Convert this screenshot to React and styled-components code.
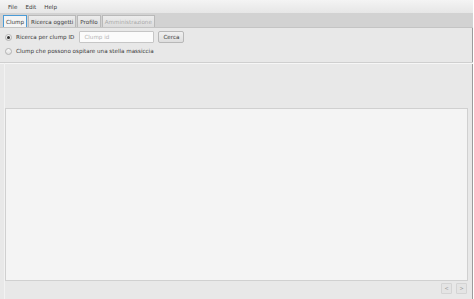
import React, { useState } from "react";
import styled, { createGlobalStyle } from "styled-components";

const GlobalStyle = createGlobalStyle`
  html, body {
    margin: 0;
    padding: 0;
    background: #e8e8e8;
  }
  * {
    box-sizing: border-box;
  }
`;

const Window = styled.div`
  width: 474px;
  height: 299px;
  display: flex;
  flex-direction: column;
  background: #e8e8e8;
  font-family: "DejaVu Sans", "Noto Sans", sans-serif;
  font-size: 5.6px;
  color: #3a3a3a;
  border-right: 1px solid #fff;
  box-shadow: inset -1px 0 0 #9c9c9c;
  overflow: hidden;
`;

const MenuBar = styled.div`
  height: 14px;
  display: flex;
  align-items: center;
  padding-left: 4px;
  background: linear-gradient(#f4f4f4, #e6e6e6);
  border-bottom: 1px solid #d2d2d2;
`;

const MenuItem = styled.span`
  padding: 0 4px;
`;

const TabHeader = styled.div`
  height: 14px;
  display: flex;
  align-items: flex-end;
  gap: 1px;
  padding-left: 3px;
  background: #d2d2d2;
  border-bottom: 1px solid #c4c4c4;
`;

const Tab = styled.div`
  height: 12px;
  display: flex;
  align-items: center;
  padding: 0 2px;
  border: 1px solid ${({ $active }) => ($active ? "#4a9bd6" : "#b9b9b9")};
  border-bottom: none;
  background: ${({ $active }) =>
    $active ? "#f4f4f4" : "linear-gradient(#ececec, #dcdcdc)"};
  color: ${({ $disabled }) => ($disabled ? "#aaa" : "#3a3a3a")};
`;

const Form = styled.div`
  display: flex;
  flex-direction: column;
  gap: 2px;
  padding: 3px 4px 5px;
  border-bottom: 1px solid #cfcfcf;
  box-shadow: 0 1px 0 #f6f6f6;
`;

const Row = styled.div`
  height: 12px;
  display: flex;
  align-items: center;
  gap: 4px;
`;

const Radio = styled.span`
  width: 7px;
  height: 7px;
  border-radius: 50%;
  border: 1px solid #b3b3b3;
  background: linear-gradient(#fafafa, #e0e0e0);
  display: flex;
  align-items: center;
  justify-content: center;
  flex-shrink: 0;
  margin-left: 1px;
  &::after {
    content: "";
    width: 3px;
    height: 3px;
    border-radius: 50%;
    background: ${({ $checked }) => ($checked ? "#333" : "transparent")};
  }
`;

const Field = styled.input`
  width: 75px;
  height: 12px;
  margin-left: 1px;
  padding: 0 4px;
  border: 1px solid #c6c6c6;
  border-radius: 1px;
  background: #fbfbfb;
  font-family: inherit;
  font-size: 5.6px;
  color: #333;
  outline: none;
  &::placeholder {
    color: #b5b5b5;
  }
`;

const Button = styled.button`
  height: 12px;
  padding: 0 4px;
  border: 1px solid #b8b8b8;
  border-radius: 2px;
  background: linear-gradient(#f0f0f0, #dedede);
  font-family: inherit;
  font-size: 5.6px;
  color: #3a3a3a;
  display: flex;
  align-items: center;
`;

const Body = styled.div`
  flex: 1;
  display: flex;
  flex-direction: column;
  padding: 45px 5px 0 5px;
  border-left: 1px solid #f2f2f2;
  margin-left: 4px;
`;

const Table = styled.div`
  flex: 1;
  margin-left: -5px;
  background: #f4f4f4;
  border: 1px solid #d0d0d0;
`;

const Footer = styled.div`
  height: 18px;
  display: flex;
  align-items: flex-start;
  justify-content: flex-end;
  gap: 4px;
  padding: 2px 1px 0 0;
`;

const PageButton = styled.button`
  width: 11px;
  height: 11px;
  padding: 0;
  border: 1px solid #d4d4d4;
  border-radius: 1px;
  background: #e4e4e4;
  color: #9a9a9a;
  font-family: inherit;
  font-size: 5px;
  line-height: 1;
`;

export default function App() {
  const [mode, setMode] = useState("id");
  const [clumpId, setClumpId] = useState("");

  return (
    <Window>
      <GlobalStyle />
      <MenuBar>
        <MenuItem>File</MenuItem>
        <MenuItem>Edit</MenuItem>
        <MenuItem>Help</MenuItem>
      </MenuBar>
      <TabHeader>
        <Tab $active>Clump</Tab>
        <Tab>Ricerca oggetti</Tab>
        <Tab>Profilo</Tab>
        <Tab $disabled>Amministrazione</Tab>
      </TabHeader>
      <Form>
        <Row onClick={() => setMode("id")}>
          <Radio $checked={mode === "id"} />
          <span>Ricerca per clump ID</span>
          <Field
            placeholder="Clump id"
            value={clumpId}
            onChange={(e) => setClumpId(e.target.value)}
          />
          <Button>Cerca</Button>
        </Row>
        <Row onClick={() => setMode("massive")}>
          <Radio $checked={mode === "massive"} />
          <span>Clump che possono ospitare una stella massiccia</span>
        </Row>
      </Form>
      <Body>
        <Table />
        <Footer>
          <PageButton>&lt;</PageButton>
          <PageButton>&gt;</PageButton>
        </Footer>
      </Body>
    </Window>
  );
}
